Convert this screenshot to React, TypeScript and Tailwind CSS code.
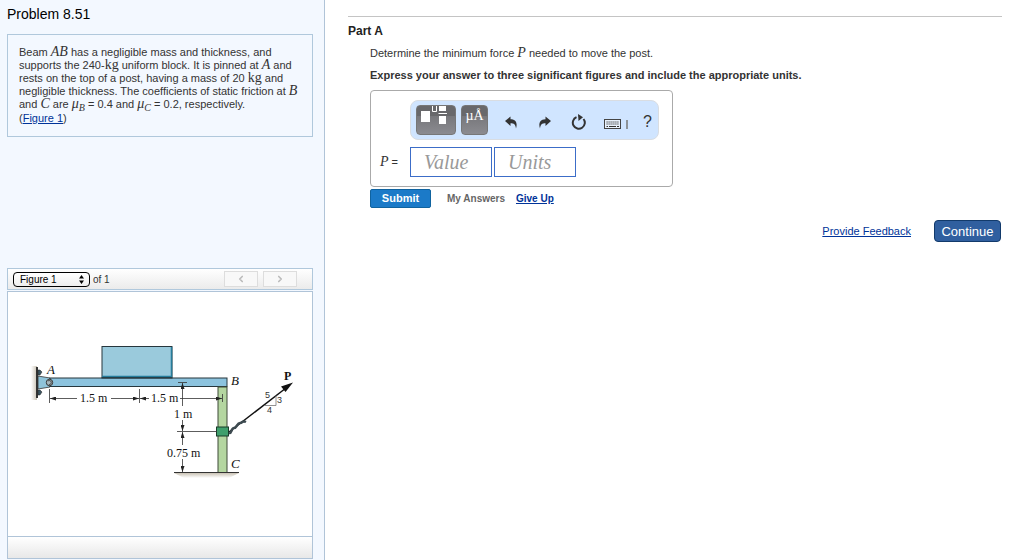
import React, { useState } from 'react';
import { ChevronLeft, ChevronRight } from 'lucide-react';

const MathVar = ({ children }: { children: React.ReactNode }) => (
  <i className="font-['Liberation_Serif',serif] text-sm leading-[0px]">{children}</i>
);

const Sub = ({ children }: { children: React.ReactNode }) => (
  <sub className="text-[10px] leading-[0px]">{children}</sub>
);

const Unit = ({ children }: { children: React.ReactNode }) => (
  <span className="font-['Liberation_Serif',serif] text-sm leading-[0px]">{children}</span>
);

const BeamDiagram = () => (
  <svg viewBox="8 292 304 244" className="block w-full" role="img" aria-label="Beam AB resting on post BC">
    <defs>
      <linearGradient id="wall" x1="1" x2="0">
        <stop offset="0" stopColor="#c9c2b4" />
        <stop offset="1" stopColor="#ffffff" />
      </linearGradient>
      <linearGradient id="ground" x1="0" x2="0" y1="0" y2="1">
        <stop offset="0" stopColor="#c9c2b4" />
        <stop offset="1" stopColor="#ffffff" />
      </linearGradient>
      <marker id="dim" viewBox="0 0 6 4" refX="6" refY="2" markerWidth="6" markerHeight="4" orient="auto-start-reverse" markerUnits="userSpaceOnUse">
        <path d="M0 0L6 2L0 4z" fill="#222" />
      </marker>
    </defs>

    {/* wall, bracket and pin */}
    <rect x="31" y="366" width="6" height="34" fill="url(#wall)" />
    <path d="M37 367V398" stroke="#333" strokeWidth="2" />
    <path d="M38 370h2l2 2-2 3h-2zM38 390h2l2 2-2 3h-2z" fill="#3c5561" stroke="#222" strokeWidth=".5" />
    <path d="M38 376L50 378V387L38 389z" fill="#8fc3d9" stroke="#333" strokeWidth=".8" />

    {/* beam and block */}
    <rect x="50" y="378" width="177" height="8.5" fill="#8cc3de" stroke="#26363d" />
    <rect x="102" y="346.500" width="70" height="31" fill="#9acadc" stroke="#26363d" />
    <path d="M102 376.500H171.500V347" fill="none" stroke="#277d9b" strokeWidth="1.500" />
    <path d="M101.500 378H172.500" stroke="#26363d" />
    <circle cx="49.500" cy="382.500" r="3.200" fill="#a9b7bc" stroke="#333" />
    <path d="M48 381a2 2 0 1 1 1 3.500" fill="none" stroke="#333" strokeWidth=".8" />

    {/* post, collar and ground */}
    <path d="M174 473H239L229 478H184z" fill="url(#ground)" />
    <rect x="218" y="387" width="9" height="85.500" fill="#b4d6a0" stroke="#3e4a38" />
    <rect x="216.500" y="427" width="12" height="9" fill="#3f9f6c" stroke="#183d29" />
    <path d="M174 472.500H239" stroke="#333" strokeWidth="1.200" />

    {/* rope and force */}
    <path d="M229 432L286 388" stroke="#111" strokeWidth="1.500" />
    <path d="M229 433c3 1 2-5 5-5s3-5 6-5 2-3 6-1" fill="none" stroke="#3d4a50" strokeWidth="2.500" />
    <path d="M293 382.500L281 386.500L285.500 392z" fill="#111" />
    <path d="M264 405.500H276V395.500" fill="none" stroke="#777" strokeWidth=".8" />

    {/* dimensions */}
    <g stroke="#333" strokeWidth=".8" fill="none">
      <path d="M49.500 389V403M139.500 389V403M222.500 394V402M178 382.500H187M177 431.500H217" />
      <path d="M77 398.500H50" markerEnd="url(#dim)" />
      <path d="M111 398.500H139" markerEnd="url(#dim)" />
      <path d="M149 398.500H140" markerEnd="url(#dim)" />
      <path d="M180 398.500H222" markerEnd="url(#dim)" />
      <path d="M182.500 406V383" markerEnd="url(#dim)" />
      <path d="M182.500 420V431" markerEnd="url(#dim)" />
      <path d="M182.500 445V432" markerEnd="url(#dim)" />
      <path d="M182.500 459V472" markerEnd="url(#dim)" />
    </g>
    <g fontFamily="Liberation Serif, serif" fontSize="12" fill="#111">
      <text x="80" y="402">1.5 m</text>
      <text x="151" y="402">1.5 m</text>
      <text x="174" y="418">1 m</text>
      <text x="167" y="457">0.75 m</text>
      <text x="284" y="380" fontWeight="bold">P</text>
      <g fontStyle="italic" fontSize="13">
        <text x="47" y="374">A</text>
        <text x="231" y="385">B</text>
        <text x="231" y="468">C</text>
      </g>
      <g fontFamily="Liberation Sans, sans-serif" fontSize="9" fill="#333">
        <text x="265" y="398">5</text>
        <text x="277" y="403">3</text>
        <text x="267" y="413">4</text>
      </g>
    </g>
  </svg>
);

const UndoIcon = ({ className = '' }: { className?: string }) => (
  <svg width="14" height="14" viewBox="0 0 14 14" className={className} aria-hidden="true">
    <path d="M1 6L6.500 1.500V4.300C11 4.300 14 7 12 13.500C11.500 9.500 10 8.300 6.500 8.300V11z" fill="#333" />
  </svg>
);

const ResetIcon = () => (
  <svg width="16" height="16" viewBox="0 0 16 16" aria-hidden="true">
    <path d="M5.500 3.200A6 6 0 1 0 12.500 5" fill="none" stroke="#333" strokeWidth="2" />
    <path d="M7 0L12 3.300L7.500 7z" fill="#333" />
  </svg>
);

const KeyboardIcon = () => (
  <svg width="24" height="12" viewBox="0 0 24 12" aria-hidden="true">
    <rect x=".5" y="1.500" width="16" height="9" fill="#e8f1fb" stroke="#444" />
    <path d="M2.500 4H15M2.500 6H15" stroke="#333" strokeDasharray="1.200 .8" />
    <path d="M2.500 8.500H4M5 8.500H12M13 8.500H15" stroke="#333" />
    <path d="M23 2V11" stroke="#777" strokeWidth="1.500" />
  </svg>
);

const toolButton = 'flex h-[30px] w-5 items-center justify-center';
const darkButton = 'flex h-[30px] justify-center overflow-hidden rounded border border-[#777] bg-linear-to-b from-[#68686b] from-35% via-[#77777b] via-35% to-[#8b8b90]';

const AnswerToolbar = () => (
  <div className="flex h-10 w-[249px] items-center rounded-lg border border-[#d9dde2] bg-[#d0e5ff] pl-[5px]">
    <button aria-label="Templates" className={`${darkButton} w-10`}>
      <svg width="38" height="28" viewBox="0 0 38 28" aria-hidden="true">
        <path d="M4 5h9v11h-9zM22 0h7v5h-7zM22 10h7v8h-7z" fill="#fff" />
        <path d="M15.500 0V5.500H19.500V0M21.500 7.500H30" fill="none" stroke="#fff" />
      </svg>
    </button>
    <button aria-label="Symbols" className={`${darkButton} ml-[5px] w-[27px] pt-[2px] font-['Liberation_Serif',serif] text-sm leading-4 text-white`}>
      µÅ
    </button>
    <div className="ml-[13px] flex gap-[14px] pt-1">
      <button aria-label="Undo" className={toolButton}><UndoIcon /></button>
      <button aria-label="Redo" className={toolButton}><UndoIcon className="-scale-x-100" /></button>
      <button aria-label="Reset" className={toolButton}><ResetIcon /></button>
      <button aria-label="Keyboard shortcuts" className="flex h-[30px] w-[26px] items-center justify-center pt-1"><KeyboardIcon /></button>
      <button aria-label="Help" className="h-[30px] text-base text-[#333]">?</button>
    </div>
  </div>
);

const fieldClass = "h-[30px] w-[82px] border border-[#3c6dc8] bg-white pl-[13px] font-['Liberation_Serif',serif] text-xl italic text-[#333] outline-none placeholder:text-[#999]";
const linkClass = 'text-[#003399] underline';
const pagerClass = 'flex h-4 w-[34px] items-center justify-center border border-[#ddd] bg-[#f8f8f8] text-[#bbb]';

const App: React.FC = () => {
  const [value, setValue] = useState('');
  const [units, setUnits] = useState('');

  return (
    <div className="flex min-h-screen bg-white font-['Liberation_Sans',Arial,sans-serif] text-[11px] leading-[13px] text-[#333]">
      <aside className="flex w-[325px] shrink-0 flex-col border-r border-[#b0c4d8] bg-[#f3f8ff] pt-1 pr-[11px] pb-px pl-[7px]">
        <h1 className="text-sm leading-5 text-black">Problem 8.51</h1>

        <section className="mt-[10px] border border-[#b0c8dc] px-[11px] pt-[11px] pb-[11px] whitespace-nowrap">
          <p>
            Beam <MathVar>AB</MathVar> has a negligible mass and thickness, and<br />
            supports the 240-<Unit>kg</Unit> uniform block. It is pinned at <MathVar>A</MathVar> and<br />
            rests on the top of a post, having a mass of 20 <Unit>kg</Unit> and<br />
            negligible thickness. The coefficients of static friction at <MathVar>B</MathVar><br />
            and <MathVar>C</MathVar> are <MathVar>μ<Sub>B</Sub></MathVar> = 0.4 and <MathVar>μ<Sub>C</Sub></MathVar> = 0.2, respectively.
          </p>
          <p className="mt-px">(<a href="#figure" className={linkClass}>Figure 1</a>)</p>
        </section>

        <section id="figure" className="mt-auto">
          <div className="flex h-[22px] items-center border border-[#b0c8dc] bg-linear-to-b from-white to-[#ebebeb] px-[5px]">
            <div className="relative">
              <select aria-label="Figure" className="block h-[15px] w-[77px] appearance-none rounded border border-black bg-linear-to-b from-white to-[#eee] pl-[6px] text-[10px] leading-[13px] text-black">
                <option>Figure 1</option>
              </select>
              <svg width="5" height="9" viewBox="0 0 5 9" className="pointer-events-none absolute top-[3px] right-[6px]" aria-hidden="true">
                <path d="M2.500 0L5 3.500H0zM2.500 9L5 5.500H0z" fill="#000" />
              </svg>
            </div>
            <span className="ml-[3px] text-[10px]">of 1</span>
            <div className="mr-[10px] ml-auto flex gap-[5px]">
              <button aria-label="Previous figure" className={pagerClass}><ChevronLeft size={10} strokeWidth={4} /></button>
              <button aria-label="Next figure" className={pagerClass}><ChevronRight size={10} strokeWidth={4} /></button>
            </div>
          </div>
          <div className="mt-px border border-[#b0c4d8] bg-white">
            <BeamDiagram />
            <div className="h-[22px] border-t border-[#b0c4d8] bg-linear-to-b from-white to-[#e8e8e8]" />
          </div>
        </section>
      </aside>

      <main className="min-w-0 flex-1 pt-4 pr-[22px] pl-[23px]">
        <hr className="border-t border-[#c4c4c4]" />
        <h2 className="mt-[7px] text-xs leading-[14px] font-bold text-[#222]">Part A</h2>
        <div className="pl-[22px]">
          <p className="mt-[9px]">Determine the minimum force <MathVar>P</MathVar> needed to move the post.</p>
          <p className="mt-[9px] font-bold">Express your answer to three significant figures and include the appropriate units.</p>

          <form onSubmit={(e) => e.preventDefault()}>
            <div className="mt-2 w-[303px] rounded border border-[#aaa] pt-[9px] pr-[13px] pb-[9px] pl-[9px]">
              <div className="flex justify-end">
                <AnswerToolbar />
              </div>
              <div className="mt-[7px] flex items-center">
                <label htmlFor="value" className="w-[30px] whitespace-nowrap"><MathVar>P</MathVar> =</label>
                <input id="value" aria-label="Value" placeholder="Value" value={value} onChange={(e) => setValue(e.target.value)} className={fieldClass} />
                <input aria-label="Units" placeholder="Units" value={units} onChange={(e) => setUnits(e.target.value)} className={`${fieldClass} ml-[2px]`} />
              </div>
            </div>
            <div className="mt-[2px] flex items-center text-[10px] font-bold">
              <button type="submit" className="h-[19px] w-[61px] rounded-xs border border-[#10639f] bg-[#1b7ac8] text-[11px] text-white">Submit</button>
              <span className="ml-4 text-[#666]">My Answers</span>
              <a href="#give-up" className={`${linkClass} ml-[11px]`}>Give Up</a>
            </div>
          </form>
        </div>

        <div className="mt-3 flex items-center justify-end gap-[23px] pr-px">
          <a href="#feedback" className={linkClass}>Provide Feedback</a>
          <button className="h-[22px] w-[67px] rounded border border-[#123a6b] bg-[#305f9f] text-[13px] text-white">Continue</button>
        </div>
      </main>
    </div>
  );
};

export default App;
